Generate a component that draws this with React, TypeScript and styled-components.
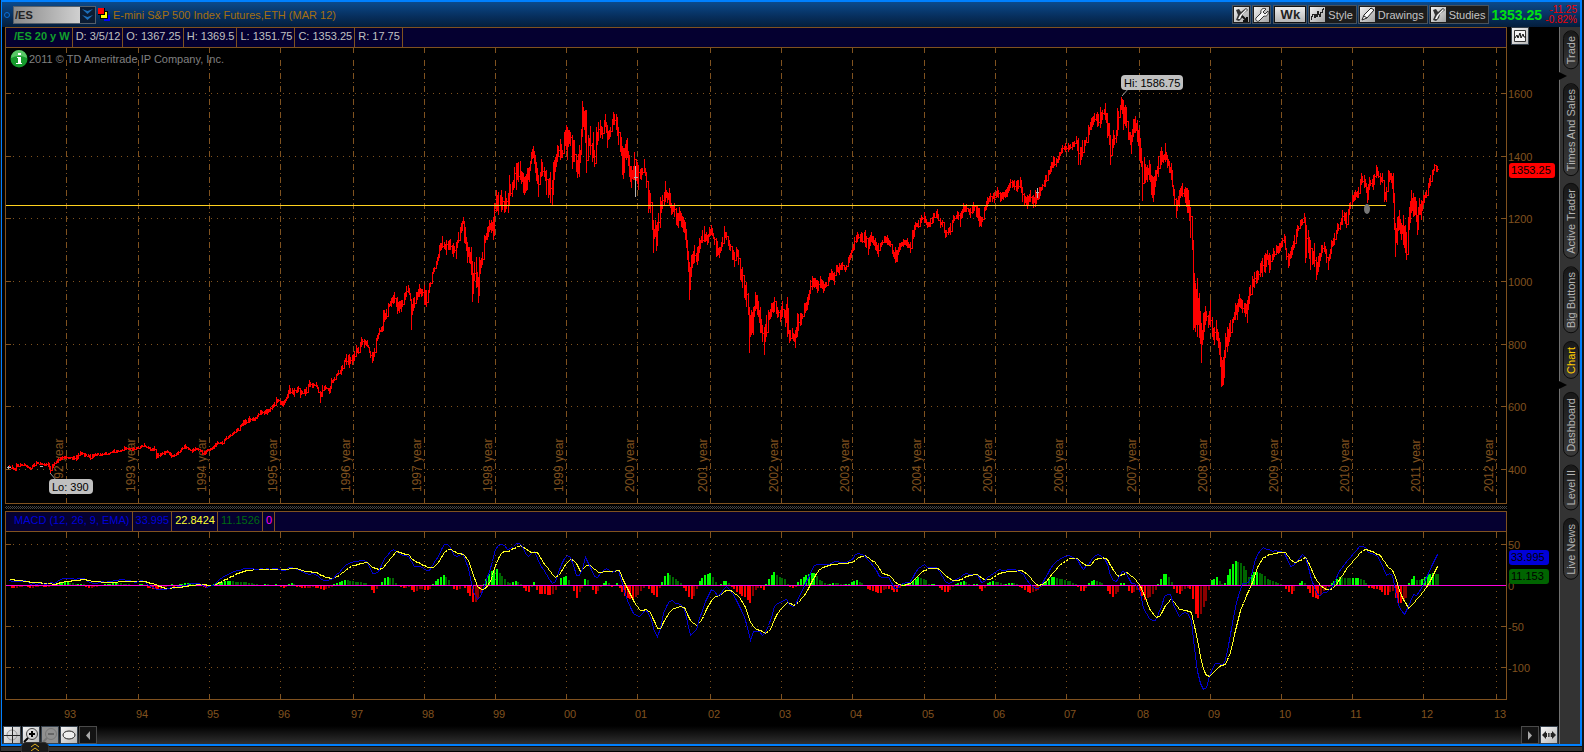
import React from "react";
import styled, { createGlobalStyle } from "styled-components";

const BROWN = "#80521f";
const FONT = '"Liberation Sans", Arial, sans-serif';

const GlobalStyle = createGlobalStyle`
  * { box-sizing: border-box; }
  body { margin: 0; background: #161616; font-family: ${FONT}; font-size: 11px; color: #c0c0c0; }
  button, input { font-family: inherit; font-size: inherit; margin: 0; }
`;

/* ---------- frame ---------- */

const Page = styled.div`
  padding: 0 2px 0 1px;
`;

const Frame = styled.div`
  border: solid #0080ff;
  border-width: 2px 2px 2px 1px;
  background: #000;
`;

const TitleBar = styled.header`
  display: flex;
  align-items: center;
  height: 25px;
  padding: 0 3px 0 2px;
  background: linear-gradient(#0b4a8c, #07305f 55%, #041e3c);
`;

const LinkDot = styled.span`
  width: 6px;
  height: 6px;
  margin: 0 3px 0 0;
  border: 1px solid #0a6fd6;
  border-radius: 50%;
`;

const SymbolBox = styled.div`
  display: flex;
  width: 83px;
  height: 18px;
  border: 1px solid #555f6a;
  background: #0a1626;
`;

const SymbolInput = styled.input`
  flex: 1;
  min-width: 0;
  border: 0;
  padding: 0 1px;
  font-weight: bold;
  color: #222;
  background: linear-gradient(90deg, #8a8a8a, #d0d0d0);
  outline: none;
`;

const DropButton = styled.button`
  display: flex;
  align-items: center;
  justify-content: center;
  width: 15px;
  border: 0;
  padding: 0;
  background: #0b1c33;
`;

const Cascade = styled.svg`
  display: block;
  margin: 0 3px 0 2px;
`;

const Instrument = styled.h1`
  margin: 0;
  flex: 1;
  font-size: 11px;
  line-height: 16px;
  font-weight: normal;
  color: #a56f10;
  white-space: nowrap;
`;

const Tools = styled.div`
  display: flex;
  gap: 1px;
`;

const ToolButton = styled.button<{ $wide?: boolean }>`
  display: flex;
  align-items: center;
  gap: 2px;
  height: 19px;
  padding: 0 ${(p) => (p.$wide ? "3px" : "0")} 0 0;
  border: 1px solid #47525e;
  background: #1c1c1c;
  color: #c4c4c4;
  white-space: nowrap;
`;

const PeriodButton = styled.button`
  width: 34px;
  height: 19px;
  margin-left: 1px;
  padding: 0;
  border: 1px solid #47525e;
  outline: 1px solid #111;
  outline-offset: -2px;
  background: linear-gradient(#efefef, #b4b4b4);
  color: #222;
  font-size: 13px;
  font-weight: bold;
`;

const LastPrice = styled.strong`
  margin-left: 2px;
  font-size: 14px;
  line-height: 18px;
  color: #00e010;
`;

const Change = styled.div`
  width: 32px;
  margin-left: 3px;
  text-align: right;
  font-size: 10px;
  line-height: 10px;
  color: #f00000;
`;

const Body = styled.div`
  display: flex;
`;

const Main = styled.main`
  flex: 1;
  min-width: 0;
`;

/* ---------- value strips ---------- */

const StripRow = styled.div`
  display: flex;
  padding-left: 3px;
  height: 20px;
`;

const Strip = styled.div`
  display: flex;
  flex: 1;
  border: solid ${BROWN};
  border-width: 1px 1px 0;
  background: #050030;
`;

const Cell = styled.span<{ $color?: string; $first?: boolean; $bold?: boolean }>`
  padding: 0 2px 0 ${(p) => (p.$first ? "8px" : "3px")};
  border-right: 1px solid ${BROWN};
  line-height: 17px;
  white-space: nowrap;
  color: ${(p) => p.$color ?? "#c0c0c0"};
  font-weight: ${(p) => (p.$bold ? "bold" : "normal")};
`;

const Gutter = styled.div`
  width: 52px;
  padding-left: 4px;
`;

const SmallButton = styled.button<{ $tone?: "light" | "dim" | "dark" }>`
  display: flex;
  align-items: center;
  justify-content: center;
  width: 18px;
  height: 18px;
  padding: 0;
  border: 1px solid ${(p) => (p.$tone === "dark" ? "#4a4a4a" : "#35404c")};
  background: ${(p) =>
    p.$tone === "dark"
      ? "#131313"
      : p.$tone === "dim"
        ? "#909090"
        : "linear-gradient(135deg, #f4f4f4, #b8b8b8)"};
`;

const Splitter = styled.div`
  height: 3px;
  margin: 2px 52px 2px 3px;
  background: repeating-conic-gradient(#454545 0 25%, #000 0 50%) 0 0 / 2px 2px;
`;

const ChartSvg = styled.svg`
  display: block;
  width: 100%;
  height: auto;
  font-family: ${FONT};
  font-size: 11px;
`;

/* ---------- bottom bar ---------- */

const BottomBar = styled.footer`
  display: flex;
  align-items: center;
  gap: 1px;
  height: 18px;
  padding: 0 1px 0 1px;
  background: linear-gradient(#000, #303030);
`;

const Spacer = styled.div`
  flex: 1;
`;

const Tray = styled.div`
  position: relative;
  height: 6px;
  background: linear-gradient(#111 1px, #333 1px 5px, #000 5px);
`;

const TrayTab = styled.button`
  position: absolute;
  left: 20px;
  bottom: 0;
  width: 28px;
  height: 10px;
  padding: 0;
  border: 1px solid #333;
  border-bottom: 0;
  border-radius: 5px 5px 0 0;
  background: #1a1a1a;
  display: flex;
  justify-content: center;
`;

/* ---------- side tabs ---------- */

const Side = styled.nav`
  display: flex;
  flex-direction: column;
  align-items: flex-end;
  gap: 7px;
  width: 21px;
  padding: 3px 1px 0 0;
  border-left: 1px solid #707070;
  background: #333;
`;

const SideTab = styled.button<{ $active?: boolean }>`
  width: 16px;
  padding: 4px 0 5px;
  border: 1px solid #0c0c0c;
  border-radius: 8px;
  background: linear-gradient(#3a3a3a, #181818);
  color: ${(p) => (p.$active ? "#ffcc00" : "#b4b4b4")};
  line-height: 14px;
  writing-mode: vertical-rl;
  transform: rotate(180deg);
  white-space: nowrap;
`;

const Notch = styled.span`
  align-self: flex-start;
  height: 0;
  margin-left: -1px;
  border: solid transparent;
  border-width: 4px 0 4px 8px;
  border-left-color: #000;
  margin-top: -4px;
  margin-bottom: -4px;
`;

/* ---------- chart data ---------- */

const YEARS: [number, number][] = [66, 138, 209, 280, 353, 424, 495, 566, 637, 710, 781, 852, 924, 995, 1066, 1139, 1210, 1281, 1352, 1423, 1496].map(
  (x, i) => [x, 1992 + i],
);

const PRICE_LEVELS: [number, number][] = [
  [93, 1600], [156, 1400], [218, 1200], [281, 1000], [344, 800], [406, 600], [469, 400],
];

const MACD_LEVELS: [number, string][] = [
  [544, "50"], [585, "0"], [626, "-50"], [667, "-100"],
];

/* x, high, low of the weekly bars */
const RANGES = `9 465 468;12 465 469;15 468 471;16 463 468;20 463 466;24 463 466;27 465 468;30 467 470;33 464 467;36 461 464;40 462 465;44 463 466;48 462 467;50 466 473;52 464 468;54 462 465;58 458 463;62 456 460;66 456 459;70 457 459;76 455 461;80 451 456;85 453 457;90 454 460;95 453 456;100 453 455;105 452 455;110 452 454;114 449 453;120 450 452;124 446 450;128 448 450;133 447 451;137 447 449;141 445 448;144 443 447;148 446 449;151 449 451;154 446 451;156 452 459;160 453 457;164 451 455;167 450 453;171 453 458;174 454 456;178 451 454;182 447 450;185 444 449;188 447 450;192 449 453;195 447 450;198 448 451;202 450 455;204 451 455;207 449 451;211 448 450;215 443 447;217 441 445;222 441 445;226 436 440;230 434 437;237 428 432;240 425 429;243 420 426;249 416 423;255 417 421;260 410 415;267 409 415;272 405 410;276 397 403;280 400 405;283 401 407;287 394 399;289 385 394;292 388 394;294 388 397;298 386 392;300 389 398;304 389 394;305 389 396;309 380 387;312 383 388;316 382 387;318 387 393;320 391 403;322 385 397;325 385 388;329 388 394;331 378 389;334 377 380;338 370 374;341 366 375;344 360 364;346 354 365;349 354 368;352 355 365;356 345 357;358 347 354;361 337 347;364 339 348;367 340 347;370 351 358;372 352 363;374 348 357;376 338 342;379 328 335;382 326 332;383 310 325;386 309 319;388 303 310;391 298 307;394 292 303;397 297 314;399 301 313;401 300 312;404 293 302;406 286 297;408 285 293;410 293 301;411 299 330;413 298 310;416 292 302;419 284 297;421 289 297;424 285 305;426 290 307;429 283 293;433 268 273;437 257 265;439 245 258;442 236 248;446 240 255;450 239 250;453 243 257;456 242 259;458 232 242;461 223 232;463 217 223;464 223 243;467 242 263;469 247 263;471 247 275;472 270 302;474 262 280;476 257 288;478 277 303;479 257 283;482 252 262;484 235 248;487 227 240;489 220 232;491 220 233;493 217 240;494 203 215;496 190 212;498 192 215;501 190 212;504 203 213;505 191 212;508 193 213;509 175 197;512 182 197;514 167 188;516 163 190;518 162 182;520 161 180;523 173 193;524 177 195;527 168 190;529 167 182;531 152 160;533 146 158;535 155 173;538 175 197;540 172 180;541 159 177;544 167 177;546 170 195;548 180 198;550 172 203;552 180 205;553 162 192;555 157 172;557 145 157;560 139 160;562 150 158;564 132 147;566 125 150;567 127 160;569 130 142;572 135 169;574 140 162;577 160 178;579 145 177;580 150 163;582 101 137;583 107 127;585 110 143;586 110 173;588 135 150;590 126 155;592 143 162;593 132 158;594 150 167;596 127 158;598 122 137;600 120 138;602 127 139;605 114 127;607 125 148;609 130 138;612 119 130;613 112 123;616 114 130;618 128 145;620 132 152;622 147 175;623 148 179;626 140 160;627 138 158;629 155 177;631 166 188;634 152 180;638 165 190;641 168 180;644 159 172;646 172 188;648 183 213;650 193 213;652 205 230;653 222 253;655 220 237;656 225 251;658 213 227;660 197 228;662 195 207;664 192 205;665 181 197;667 193 203;669 188 205;671 205 215;674 203 217;676 208 225;678 213 228;679 207 218;681 213 227;683 217 232;685 222 240;687 240 260;689 262 300;690 267 290;691 255 272;694 245 263;697 247 265;699 238 253;702 230 243;704 226 242;707 235 245;709 227 237;711 225 235;714 237 245;716 238 257;719 247 258;722 237 247;724 226 240;726 232 240;729 240 250;732 247 260;734 252 267;736 247 257;738 250 265;740 263 280;742 267 288;744 283 298;746 282 307;748 293 315;749 310 353;751 310 335;753 307 335;755 292 307;757 295 315;759 310 323;760 307 333;762 327 342;764 327 355;766 315 337;768 310 323;771 303 317;774 297 312;777 307 318;780 310 322;782 301 317;785 310 327;787 297 337;789 330 343;792 328 338;795 330 348;797 313 337;801 313 325;804 303 317;807 297 310;810 280 293;812 276 290;815 278 287;817 280 293;820 276 288;823 282 293;826 282 287;829 273 280;831 269 280;834 272 285;836 265 273;839 263 275;842 262 270;845 267 272;848 257 265;851 250 257;854 237 250;857 232 242;861 232 242;865 230 247;868 240 255;871 232 242;875 238 250;878 243 257;881 242 247;884 236 243;887 235 245;890 241 247;893 250 257;895 247 263;897 250 262;899 243 252;903 239 247;907 238 248;910 242 253;912 230 247;915 222 228;918 220 228;921 215 223;924 212 223;927 222 228;930 218 227;933 213 223;937 209 218;940 218 228;942 220 227;945 230 238;948 228 235;950 223 235;953 215 222;957 211 219;960 213 227;963 203 213;966 204 212;970 208 218;973 202 212;976 205 217;979 208 227;981 217 227;984 207 217;987 197 207;990 193 202;994 192 203;997 187 197;1000 192 202;1003 192 200;1007 187 197;1010 179 188;1014 180 190;1017 180 192;1020 177 188;1022 187 202;1024 193 205;1027 195 209;1030 190 202;1033 195 208;1035 190 207;1039 187 198;1042 184 190;1045 175 187;1048 170 178;1051 162 172;1053 156 167;1056 158 167;1059 152 160;1062 145 153;1065 143 152;1068 143 152;1072 142 150;1076 136 142;1078 138 165;1080 147 165;1082 140 157;1086 137 143;1088 125 137;1091 118 130;1094 113 122;1097 112 127;1100 107 128;1102 110 120;1105 103 120;1107 113 138;1109 123 145;1110 135 165;1113 130 148;1116 130 143;1117 108 135;1120 105 115;1121 97 110;1123 100 130;1126 107 128;1128 123 140;1131 135 154;1133 119 137;1135 116 133;1137 120 142;1139 128 160;1141 148 167;1142 163 201;1144 157 183;1147 165 182;1149 160 180;1151 175 195;1153 177 202;1155 170 187;1158 156 177;1161 147 165;1163 155 163;1165 143 162;1167 155 168;1171 163 180;1174 190 205;1176 198 218;1179 190 207;1182 183 197;1185 187 203;1187 188 213;1188 190 213;1190 207 238;1192 225 250;1193 248 330;1195 283 332;1197 278 337;1199 293 338;1201 323 363;1203 313 340;1205 306 325;1208 315 328;1210 300 327;1212 317 337;1214 327 345;1216 320 340;1218 337 348;1219 338 355;1221 363 387;1223 357 385;1225 333 357;1227 327 352;1230 320 337;1233 317 323;1235 303 320;1237 303 320;1239 294 307;1242 300 313;1245 303 317;1247 300 323;1249 287 303;1252 276 288;1254 272 288;1257 270 283;1260 263 277;1262 258 277;1265 253 273;1267 250 260;1269 253 273;1273 248 260;1276 245 255;1279 243 253;1282 238 247;1284 234 243;1286 250 260;1288 253 268;1291 247 258;1294 235 248;1297 225 237;1300 220 228;1304 213 222;1305 217 263;1308 230 253;1310 240 270;1312 258 265;1314 243 267;1316 257 280;1319 253 267;1321 245 257;1324 242 252;1326 250 263;1328 257 270;1331 240 252;1334 233 243;1337 223 233;1340 222 230;1342 210 225;1346 212 228;1349 203 212;1352 195 205;1355 190 200;1358 187 198;1361 173 185;1364 175 188;1366 183 193;1367 187 203;1369 177 185;1373 175 190;1376 165 178;1380 173 185;1382 173 183;1384 187 202;1386 187 202;1388 170 185;1391 173 183;1393 173 203;1394 203 230;1395 223 257;1397 217 245;1399 210 230;1401 223 240;1403 215 245;1405 225 253;1406 232 260;1409 207 230;1411 190 213;1413 193 217;1415 197 215;1417 215 235;1419 198 215;1421 200 220;1423 195 205;1426 190 198;1429 178 188;1432 170 177;1434 164 170;1436 166 172`
  .split(";")
  .map((row) => row.split(" ").map(Number));

/* x, y of the signal line */
const SIGNAL = `8 579;20 580;33 582;50 583;54 584;60 582;75 580;85 579;93 581;110 582;125 581;145 581;155 584;165 588;178 587;190 585;200 584;212 585;218 583;225 579;235 574;247 570;258 569;280 569;296 568;305 571;316 572;325 577;333 578;340 574;350 566;360 563;367 562;372 567;378 569;382 568;390 558;396 551;402 553;408 554;413 560;420 563;427 567;433 567;438 562;443 553;449 548;455 552;463 554;468 560;472 572;477 586;481 589;485 588;490 581;495 565;500 554;503 551;508 551;515 547;521 545;527 550;532 552;537 552;542 561;549 570;555 577;560 573;565 564;570 559;575 561;580 571;586 565;590 565;598 572;604 571;612 571;619 570;623 580;628 590;634 602;640 610;646 609;650 612;657 628;660 628;664 620;671 609;680 606;684 607;690 620;696 625;701 620;707 607;713 597;719 595;726 590;731 590;739 597;745 607;750 622;756 629;761 630;765 633;770 629;776 614;782 607;787 602;794 605;799 601;806 592;812 580;818 570;824 566;832 564;842 563;852 562;858 557;865 555;870 559;875 562;882 573;889 575;896 583;902 585;910 583;916 577;922 571;928 568;938 568;945 575;952 580;959 580;968 575;976 574;984 579;990 579;998 573;1008 571;1022 570;1028 575;1036 584;1040 585;1046 581;1052 573;1060 564;1069 558;1077 558;1085 565;1090 565;1095 559;1103 557;1107 559;1113 570;1118 576;1127 572;1135 579;1140 586;1144 595;1150 610;1156 617;1160 615;1165 605;1171 598;1179 609;1186 610;1191 612;1195 630;1198 645;1202 666;1206 675;1209 676;1214 671;1220 665;1225 664;1230 652;1235 630;1240 610;1246 595;1252 582;1257 567;1263 557;1270 554;1280 552;1285 552;1291 560;1295 562;1300 560;1305 557;1309 564;1314 576;1320 585;1326 589;1331 589;1335 585;1341 576;1348 566;1354 559;1360 552;1365 549;1372 551;1380 555;1387 566;1392 570;1395 577;1400 593;1408 608;1412 604;1418 597;1424 590;1430 580;1437 566`
  .split(";")
  .map((row) => row.split(" ").map(Number));

/* x, height of the MACD minus signal histogram */
const DIFF = `8 0;12 -2;20 -1;24 0;30 -2;40 0;46 -1;50 0;58 2;66 3;75 1;82 1;88 -2;95 -1;100 0;115 2;125 1;135 0;141 1;148 -2;158 -4;166 -1;170 1;174 -1;178 1;190 2;198 1;205 -2;212 0;218 3;228 4;240 3;250 2;258 0;265 1;270 0;275 1;283 -2;290 2;297 -1;305 -2;313 -1;322 -4;330 -1;338 3;345 5;355 3;365 2;368 0;373 -7;378 -1;385 8;392 7;396 0;402 -2;408 -1;413 -6;420 -3;428 -4;432 1;437 6;443 10;448 5;452 -2;457 -5;462 1;468 -8;473 -18;478 -12;482 -2;486 8;490 13;496 16;502 8;508 2;516 4;522 0;527 -8;533 3;538 -8;545 -8;551 -10;556 -2;560 7;566 9;571 0;576 -12;581 -2;585 9;589 0;595 -8;600 -1;605 4;611 -1;617 2;621 -6;626 -12;632 -13;636 -10;642 -3;646 1;650 -6;656 -11;659 -2;663 8;667 12;673 7;680 2;684 -3;690 -15;695 -6;698 2;703 10;710 12;715 3;718 -1;724 5;729 1;733 -3;740 -9;745 -12;750 -18;753 -6;758 -1;763 -4;766 3;773 13;780 7;785 6;788 -1;794 -2;798 4;805 10;813 12;820 4;826 1;833 2;843 1;848 1;855 5;862 2;867 -3;873 -5;879 -8;884 -3;889 -3;895 -7;901 1;910 2;917 8;924 6;928 1;935 1;940 -3;946 -7;952 -1;958 2;964 4;970 0;976 1;982 -6;985 0;990 4;998 3;1003 1;1012 2;1018 0;1022 -3;1028 -7;1036 -5;1041 0;1046 5;1052 8;1060 6;1068 4;1076 0;1082 -7;1087 1;1093 5;1098 4;1103 1;1106 -3;1111 -12;1117 -6;1121 4;1125 0;1130 -8;1136 -4;1139 -5;1143 -14;1149 -11;1154 -6;1158 3;1164 12;1170 6;1173 -3;1178 -9;1182 -4;1186 -1;1190 -4;1193 -18;1196 -33;1201 -27;1206 -12;1210 4;1216 8;1220 2;1222 -1;1225 3;1229 16;1234 24;1242 21;1248 8;1250 8;1254 14;1260 12;1268 5;1278 2;1283 0;1287 -5;1291 -8;1295 -1;1302 5;1306 -1;1311 -11;1317 -13;1324 -4;1330 1;1338 8;1348 7;1358 7;1363 5;1368 -2;1378 -3;1386 -11;1391 -3;1394 -10;1398 -19;1405 -12;1408 2;1413 9;1417 4;1424 8;1431 12;1437 11`
  .split(";")
  .map((row) => row.split(" ").map(Number));

const noise = (n: number) => {
  const s = Math.sin(n * 12.9898) * 43758.5453;
  return s - Math.floor(s);
};

const lerpAt = (rows: number[][], x: number, col: number) => {
  let i = 0;
  while (i < rows.length - 2 && rows[i + 1][0] < x) i++;
  const a = rows[i];
  const b = rows[i + 1];
  const t = Math.max(0, Math.min(1, (x - a[0]) / (b[0] - a[0])));
  return a[col] + (b[col] - a[col]) * t;
};

function buildBars() {
  const keyed = new Map(RANGES.map((r) => [r[0], r]));
  let d = "";
  let last = 467;
  for (let x = 9; x <= 1437; x++) {
    const key = keyed.get(x);
    if (!key && x % 4 === 3) continue;
    let hi = key ? key[1] : lerpAt(RANGES, x, 1);
    let lo = key ? key[2] : lerpAt(RANGES, x, 2);
    if (!key) {
      const span = lo - hi;
      hi += span * 0.35 * noise(x);
      lo -= span * 0.35 * noise(x + 7);
    }
    hi = Math.round(hi);
    lo = Math.max(hi + 2, Math.round(lo));
    const close = Math.round(hi + (lo - hi) * (0.2 + 0.6 * noise(x + 3)));
    /* every bar opens at the previous close, so its range reaches that level */
    hi = Math.min(hi, last);
    lo = Math.max(lo, last + 1);
    d += `M${x} ${hi}h1V${lo}h-1zM${x - 1} ${last}h1v1h-1zM${x + 1} ${close}h1v1h-1z`;
    last = close;
  }
  return d;
}

function buildMacd() {
  const hist: Record<string, string> = { "#00ff00": "", "#006400": "", "#ff0000": "", "#8b0000": "" };
  const macd: string[] = [];
  const signal: string[] = [];
  let prev = 0;
  for (let x = 8; x <= 1437; x++) {
    const h = lerpAt(DIFF, x, 1);
    const s = lerpAt(SIGNAL, x, 1);
    const wobble = x % 3 === 0 ? (noise(x) - 0.5) * 1.6 : 0;
    if (x % 3 !== 2) signal.push(`${x + 0.5} ${Math.round(s) + 0.5}`);
    if (x % 3 === 0) macd.push(`${x + 0.5} ${Math.round(s - h + wobble) + 0.5}`);
    if (x % 8 === 0 || x % 8 === 3 || x % 8 === 5) {
      const color = h >= 0 ? (h >= prev ? "#00ff00" : "#006400") : h <= prev ? "#ff0000" : "#8b0000";
      const len = Math.round(Math.abs(h));
      if (len > 0) {
        hist[color] += h > 0 ? `M${x} ${585 - len}h2v${len}h-2z` : `M${x} 586h2v${len}h-2z`;
      }
      prev = h;
    }
  }
  return { hist, macd: macd.join(" "), signal: signal.join(" ") };
}

const BARS = buildBars();
const MACD = buildMacd();

/* ---------- icons ---------- */

const IconTile = ({ children }: { children: React.ReactNode }) => (
  <svg width="17" height="17" viewBox="0 0 17 17" aria-hidden="true">
    <defs>
      <linearGradient id="tile" x1="0" y1="0" x2="1" y2="1">
        <stop offset="0" stopColor="#f0f0f0" />
        <stop offset="1" stopColor="#a4a4a4" />
      </linearGradient>
    </defs>
    <rect x="1" y="1" width="15" height="15" fill="url(#tile)" />
    {children}
  </svg>
);

const FlaskGlyph = () => (
  <>
    <path d="M3 4l3-1 2 3 5-4 2 2-5 4-1 4-3 3-3-1 2-5z" fill="#333" />
    <path d="M5 13l2-4 6-6 1 1-5 5-2 4z" fill="#f6f6f6" />
  </>
);

const WrenchGlyph = () => (
  <path
    d="M3 12l5-5c-1-3 2-6 5-4l-3 3 2 2 3-3c1 4-2 6-4 5l-5 5c-2 1-4-1-3-3z"
    fill="#f4f4f4" stroke="#333" strokeWidth="1"
  />
);

const WaveGlyph = () => (
  <path
    d="M2 13.500v-3h1v-2h2v3h1v-3h1v2h1v-5h1v3h1v2h1v-4h2v-3h1v-1h1"
    fill="none" stroke="#222" shapeRendering="crispEdges"
  />
);

const PenGlyph = () => (
  <path d="M3 14l2-5 7-7 3 2-7 8-5 2zm2-4l3 2" fill="#fafafa" stroke="#222" strokeWidth="1" />
);

/* ---------- chart panels ---------- */

function PricePanel() {
  return (
    <ChartSvg viewBox="2 47 1557 457" role="img" aria-label="Weekly price chart">
      <g shapeRendering="crispEdges" stroke={BROWN} fill="none">
        {PRICE_LEVELS.map(([y]) => (
          <React.Fragment key={y}>
            <path d={`M13 ${y}.5H1500`} strokeDasharray="1 5" />
            <path d={`M5 ${y}.5h6M1501 ${y}.5h6`} />
          </React.Fragment>
        ))}
        {YEARS.map(([x]) => (
          <React.Fragment key={x}>
            <path d={`M${x}.5 60V498`} strokeDasharray="6 3 1 3" />
            <path d={`M${x}.5 48v5M${x}.5 498v5`} />
          </React.Fragment>
        ))}
        <path d="M5.5 47.5H1506.5V503.5H5.5z" />
      </g>
      <g fill={BROWN} fontSize="12">
        {YEARS.map(([x, year]) => (
          <text key={year} transform={`translate(${x - 3} 492) rotate(-90)`}>{`${year} year`}</text>
        ))}
      </g>
      <g fill={BROWN}>
        {PRICE_LEVELS.map(([y, v]) => (
          <text key={v} x="1508" y={y + 5}>{v}</text>
        ))}
      </g>
      <path d={BARS} fill="#ff0000" shapeRendering="crispEdges" />
      <g shapeRendering="crispEdges">
        <path d="M7 467h4v1h-4zM8 466h1v3h-1zM40 466h3v1h-3zM635 166h1v31h-1zM634 177h4v1h-4zM1037 188h1v10h-1zM1036 192h3v1h-3z" fill="#b4b4b4" />
        <path d="M6 205h1380v1H6z" fill="#ffd21f" />
      </g>
      <ellipse cx="1367" cy="209" rx="3" ry="5" fill="#777" />
      <path d="M50 473l7 8M1122 96l7-8" stroke="#9a9a9a" />
      <rect x="49" y="479" width="44" height="15" rx="4" fill="#c0c0c0" />
      <text x="52" y="491" fill="#000">Lo: 390</text>
      <rect x="1121" y="75" width="62" height="15" rx="4" fill="#c0c0c0" />
      <text x="1124" y="87" fill="#000">Hi: 1586.75</text>
      <rect x="1509" y="163" width="46" height="15" rx="3" fill="#ff0000" />
      <text x="1511" y="174" fill="#000">1353.25</text>
      <circle cx="19" cy="59" r="8.5" fill="#159a2c" />
      <path d="M11 58a8 8 0 0 1 16 0q-8-4-16 0z" fill="#58c766" />
      <path d="M18 53h3v2h-3zM17 57h4v6h1v1h-6v-1h2v-5h-1z" fill="#fff" />
      <text x="29" y="63" fill="#808080">2011 © TD Ameritrade IP Company, Inc.</text>
    </ChartSvg>
  );
}

function MacdPanel() {
  return (
    <ChartSvg viewBox="2 531 1557 195" role="img" aria-label="MACD study">
      <g shapeRendering="crispEdges" stroke={BROWN} fill="none">
        {MACD_LEVELS.map(([y]) => (
          <React.Fragment key={y}>
            <path d={`M13 ${y}.5H1500`} strokeDasharray="1 5" />
            <path d={`M5 ${y}.5h6M1501 ${y}.5h6`} />
          </React.Fragment>
        ))}
        {YEARS.map(([x]) => (
          <React.Fragment key={x}>
            <path d={`M${x}.5 543V692`} strokeDasharray="1 5" />
            <path d={`M${x}.5 532v6M${x}.5 694v5`} />
          </React.Fragment>
        ))}
        <path d="M5.5 531.5H1506.5V699.5H5.5z" />
      </g>
      <path d="M6 585h1500v1H6z" fill="#ff00e0" shapeRendering="crispEdges" />
      {Object.entries(MACD.hist).map(([color, d]) => (
        <path key={color} d={d} fill={color} shapeRendering="crispEdges" />
      ))}
      <g fill="none" shapeRendering="crispEdges">
        <polyline points={MACD.macd} stroke="#0000d0" />
        <polyline points={MACD.signal} stroke="#ffff20" />
        <polyline points={MACD.macd} stroke="#0000d0" strokeDasharray="5 7" />
      </g>
      <g fill={BROWN}>
        {MACD_LEVELS.map(([y, v]) => (
          <text key={v} x="1508" y={y + 5}>{v}</text>
        ))}
        {YEARS.map(([x, year]) => (
          <text key={year} x={x + 4} y="718" textAnchor="middle">{String(year + 1).slice(2)}</text>
        ))}
      </g>
      <rect x="1509" y="550" width="40" height="15" rx="3" fill="#0000d8" />
      <text x="1511" y="561" fill="#000">33.995</text>
      <rect x="1509" y="569" width="40" height="15" rx="3" fill="#006400" />
      <text x="1511" y="580" fill="#000">11.153</text>
    </ChartSvg>
  );
}

/* ---------- page ---------- */

const PRICE_CELLS = ["D: 3/5/12", "O: 1367.25", "H: 1369.5", "L: 1351.75", "C: 1353.25", "R: 17.75"];

export default function App() {
  return (
    <Page>
      <GlobalStyle />
      <Frame>
        <TitleBar>
          <LinkDot />
          <SymbolBox>
            <SymbolInput aria-label="Symbol" defaultValue="/ES" />
            <DropButton aria-label="Symbol list">
              <svg width="11" height="12" viewBox="0 0 11 12" fill="#1d6fb8">
                <path d="M0 0l5.500 2L11 0 5.500 5zM0 6l5.500 2L11 6l-5.500 5z" />
              </svg>
            </DropButton>
          </SymbolBox>
          <Cascade width="12" height="13" viewBox="0 0 12 13" shapeRendering="crispEdges">
            <rect x="6" y="7" width="6" height="6" fill="#0000ff" />
            <rect x="2" y="3" width="8" height="8" fill="#000" />
            <rect x="3" y="4" width="6" height="6" fill="#ffff00" />
            <rect x="0" y="0" width="7" height="7" fill="#000" />
            <rect x="0" y="0" width="6" height="6" fill="#ff0000" />
          </Cascade>
          <Instrument>E-mini S&amp;P 500 Index Futures,ETH (MAR 12)</Instrument>
          <Tools>
            <ToolButton aria-label="Edit studies"><IconTile><FlaskGlyph /><path d="M9 10l5 5m0-4v4h-4" stroke="#111" strokeWidth="2" fill="none" /></IconTile></ToolButton>
            <ToolButton aria-label="Settings"><IconTile><WrenchGlyph /></IconTile></ToolButton>
            <PeriodButton>Wk</PeriodButton>
            <ToolButton $wide><IconTile><WaveGlyph /></IconTile>Style</ToolButton>
            <ToolButton $wide><IconTile><PenGlyph /></IconTile>Drawings</ToolButton>
            <ToolButton $wide><IconTile><FlaskGlyph /></IconTile>Studies</ToolButton>
          </Tools>
          <LastPrice>1353.25</LastPrice>
          <Change>-11.25<br />-0.82%</Change>
        </TitleBar>
        <Body>
          <Main>
            <StripRow>
              <Strip>
                <Cell $first $bold $color="#12a02c">/ES 20 y W</Cell>
                {PRICE_CELLS.map((c) => <Cell key={c}>{c}</Cell>)}
              </Strip>
              <Gutter>
                <SmallButton aria-label="Chart mode">
                  <svg width="14" height="14" viewBox="0 0 14 14">
                    <path d="M1.500 1.500h11v11h-11z" fill="#f4f4f4" stroke="#333" />
                    <path d="M2 9l2-3 1 3 2-5 1 5 2-4 1 3h2" fill="none" stroke="#111" />
                  </svg>
                </SmallButton>
              </Gutter>
            </StripRow>
            <PricePanel />
            <Splitter />
            <StripRow>
              <Strip>
                <Cell $first $color="#0000d8">MACD (12, 26, 9, EMA)</Cell>
                <Cell $color="#0000d8">33.995</Cell>
                <Cell $color="#ffff30">22.8424</Cell>
                <Cell $color="#006a10">11.1526</Cell>
                <Cell $color="#ff00ff">0</Cell>
              </Strip>
              <Gutter />
            </StripRow>
            <MacdPanel />
            <BottomBar>
              <SmallButton aria-label="Crosshair">
                <svg width="16" height="16" viewBox="0 0 16 16" fill="none">
                  <circle cx="8" cy="8" r="5" stroke="#999" />
                  <path d="M8 0v16M0 8h16" stroke="#222" strokeWidth="1" shapeRendering="crispEdges" />
                </svg>
              </SmallButton>
              <SmallButton aria-label="Zoom in">
                <svg width="16" height="16" viewBox="0 0 16 16" fill="none">
                  <circle cx="9" cy="7" r="5.500" stroke="#444" />
                  <path d="M9 4v6M6 7h6" stroke="#000" strokeWidth="2" />
                  <path d="M5 11l-4 4" stroke="#000" strokeWidth="2" />
                </svg>
              </SmallButton>
              <SmallButton $tone="dim" aria-label="Zoom out">
                <svg width="16" height="16" viewBox="0 0 16 16" fill="none">
                  <circle cx="9" cy="7" r="5.500" stroke="#777" />
                  <path d="M6 7h6" stroke="#666" strokeWidth="2" />
                  <path d="M5 11l-4 4" stroke="#777" strokeWidth="2" />
                </svg>
              </SmallButton>
              <SmallButton aria-label="Lasso">
                <svg width="16" height="16" viewBox="0 0 16 16" fill="#eee">
                  <ellipse cx="8" cy="8" rx="6" ry="4" stroke="#222" strokeWidth="1" />
                </svg>
              </SmallButton>
              <SmallButton $tone="dark" aria-label="Scroll left">
                <svg width="6" height="9" viewBox="0 0 6 9"><path d="M5 0v9L1 4.500z" fill="#aaa" /></svg>
              </SmallButton>
              <Spacer />
              <SmallButton $tone="dark" aria-label="Scroll right">
                <svg width="6" height="9" viewBox="0 0 6 9"><path d="M1 0v9l4-4.500z" fill="#aaa" /></svg>
              </SmallButton>
              <SmallButton aria-label="Fit width">
                <svg width="14" height="10" viewBox="0 0 14 10">
                  <path d="M0 5l4-4v2h1v4H4v2zM14 5l-4-4v2H9v4h1v2zM6 3h.8v4H6zM7.500 3h.8v4h-.8z" fill="#222" />
                </svg>
              </SmallButton>
            </BottomBar>
          </Main>
          <Side>
            <SideTab>Trade</SideTab>
            <Notch />
            <SideTab>Times And Sales</SideTab>
            <SideTab>Active Trader</SideTab>
            <SideTab>Big Buttons</SideTab>
            <SideTab $active>Chart</SideTab>
            <Notch />
            <SideTab>Dashboard</SideTab>
            <SideTab>Level II</SideTab>
            <SideTab>Live News</SideTab>
          </Side>
        </Body>
      </Frame>
      <Tray>
        <TrayTab aria-label="Open tray">
          <svg width="10" height="8" viewBox="0 0 10 8" fill="none" stroke="#e0b020">
            <path d="M1 4l4-3 4 3M1 8l4-3 4 3" />
          </svg>
        </TrayTab>
      </Tray>
    </Page>
  );
}
